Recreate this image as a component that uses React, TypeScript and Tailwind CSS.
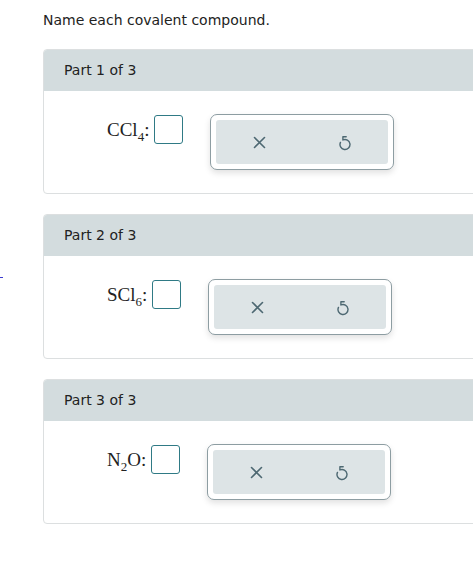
import React from "react";

type Part = { n: number; label: React.ReactNode };

const sub = "text-[13px] relative top-[5px] leading-none";

const parts: Part[] = [
  { n: 1, label: <>CCl<sub className={sub}>4</sub>:</> },
  { n: 2, label: <>SCl<sub className={sub}>6</sub>:</> },
  { n: 3, label: <>N<sub className={sub}>2</sub>O:</> },
];

function XIcon() {
  return (
    <svg width="13" height="13" viewBox="0 0 13 13" fill="none" stroke="#4d6872" strokeWidth="1.6" strokeLinecap="round">
      <path d="M1.5 1.5 L11.5 11.5 M11.5 1.5 L1.5 11.5" />
    </svg>
  );
}

function UndoIcon() {
  return (
    <svg width="13" height="16" viewBox="0 0 13 16" fill="none" stroke="#4d6872" strokeWidth="1.4" strokeLinecap="round" strokeLinejoin="round">
      {/* arrow corner + nearly full circle */}
      <path d="M7.2 1.8 H3.9 V4.97 A5 5 0 1 1 1.47 7.39" />
    </svg>
  );
}

function PartCard({ part }: { part: Part }) {
  return (
    <div className="w-[450px] border border-[#dcdfe0] rounded-l-[4px] overflow-hidden">
      <div className="h-[41px] bg-[#d3dcde] flex items-center pl-[20px] text-[14px] text-[#222]">
        Part {part.n} of 3
      </div>
      <div className="h-[102px] flex items-start pt-[23px] pl-[63px]">
        <div className="flex items-start pt-[1px]">
          <span className="font-['Liberation_Serif',serif] text-[19px] text-[#222] leading-[29px]">{part.label}</span>
          <div className="ml-[5px] w-[29px] h-[29px] border border-[#2f7a85] rounded-[3px] bg-white" />
        </div>
        <div className="ml-[27px] w-[184px] h-[56px] border border-[#8d9da2] rounded-[7px] p-[5px] shadow-[0_3px_6px_rgba(0,0,0,0.12)] bg-white">
          <div className="h-full bg-[#dde4e6] rounded-[3px] flex items-center">
            <div className="flex-1 flex justify-center pt-[1px]">
              <XIcon />
            </div>
            <div className="flex-1 flex justify-center pt-[1px]">
              <UndoIcon />
            </div>
          </div>
        </div>
      </div>
    </div>
  );
}

export default function App() {
  return (
    <div className="relative w-[473px] h-[586px] overflow-hidden bg-white font-['DejaVu_Sans',Verdana,sans-serif]">
      <div className="absolute left-0 top-[277px] w-[3px] h-[1px] bg-[#3a3ad0]" />
      <div className="pl-[43px] pt-[11px]">
        <p className="text-[14px] text-[#222] leading-[18px]">Name each covalent compound.</p>
        <div className="mt-[20px] flex flex-col gap-[20px]">
          {parts.map((p) => (
            <PartCard key={p.n} part={p} />
          ))}
        </div>
      </div>
    </div>
  );
}
